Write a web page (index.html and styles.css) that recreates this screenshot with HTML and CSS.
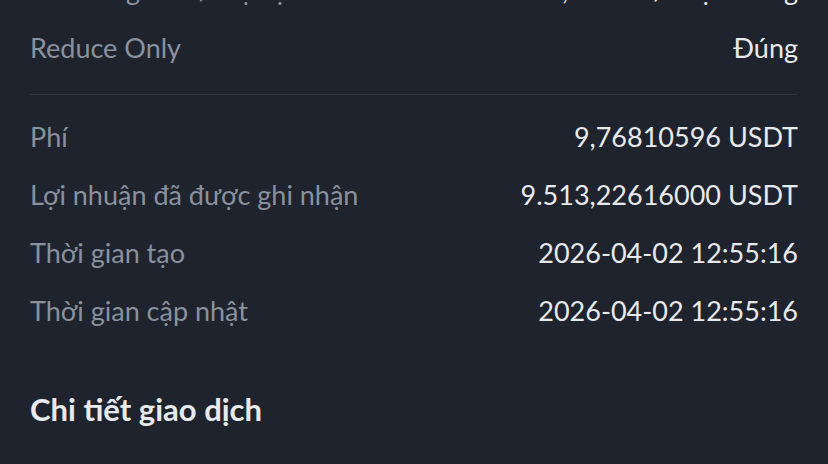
FILE: index.html
```html
<!DOCTYPE html>
<html lang="vi">
<head>
<meta charset="utf-8">
<title>Chi tiết lệnh</title>
<link rel="stylesheet" href="styles.css">
</head>
<body>
<main class="page">
  <section class="details">
    <div class="row">
      <span class="label">Giá trung bình/Loại lệnh</span>
      <span class="value">0,05417 / Thị trường</span>
    </div>
    <div class="row">
      <span class="label">Reduce Only</span>
      <span class="value">Đúng</span>
    </div>
  </section>
  <hr class="divider">
  <section class="details">
    <div class="row">
      <span class="label">Phí</span>
      <span class="value">9,76810596 USDT</span>
    </div>
    <div class="row">
      <span class="label">Lợi nhuận đã được ghi nhận</span>
      <span class="value">9.513,22616000 USDT</span>
    </div>
    <div class="row">
      <span class="label">Thời gian tạo</span>
      <span class="value">2026-04-02 12:55:16</span>
    </div>
    <div class="row">
      <span class="label">Thời gian cập nhật</span>
      <span class="value">2026-04-02 12:55:16</span>
    </div>
  </section>
  <h2 class="section-title">Chi tiết giao dịch</h2>
</main>
</body>
</html>
```

FILE: styles.css
```css
html, body {
  margin: 0;
  padding: 0;
  background: #1f232d;
  overflow: hidden;
}

body {
  font-family: "Lato", "Noto Sans", sans-serif;
  color: #e8eaed;
}

.page {
  display: flex;
  flex-direction: column;
  padding: 0 30px;
  margin-top: -39px;
}

.details {
  display: flex;
  flex-direction: column;
}

.row {
  display: flex;
  justify-content: space-between;
  align-items: center;
  height: 58px;
  line-height: 58px;
  font-size: 27px;
}

.label {
  color: #8a919e;
}

.value {
  color: #e8eaed;
}

.divider {
  border: 0;
  height: 1px;
  background: #2f3541;
  margin: 17px 0 13px;
}

.section-title {
  margin: 49px 0 0;
  font-size: 31px;
  line-height: 40px;
  font-weight: 700;
  color: #e8eaed;
}
```
